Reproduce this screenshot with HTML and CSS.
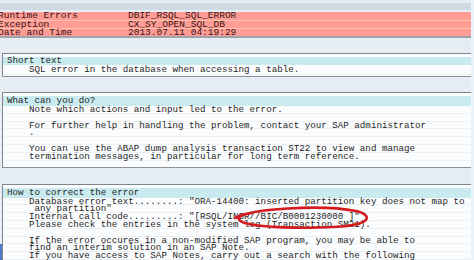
FILE: index.html
```html
<!DOCTYPE html>
<html lang="en">
  <head>
    <meta charset="UTF-8" />
    <title>ABAP runtime error</title>
    <link rel="stylesheet" href="styles.css">
  </head>
  <body>
    <div class="screen">
      <div class="topbar"></div>

      <div class="summary">
        <div class="sum-row"><span class="sum-label">Runtime Errors</span><span>DBIF_RSQL_SQL_ERROR</span></div>
        <div class="sum-row"><span class="sum-label">Exception</span><span>CX_SY_OPEN_SQL_DB</span></div>
        <div class="sum-row"><span class="sum-label">Date and Time</span><span>2013.07.11 04:19:29</span></div>
      </div>

      <div class="box box-short">
        <div class="box-head">Short text</div>
        <div class="line">    SQL error in the database when accessing a table.</div>
      </div>

      <div class="box box-help">
        <div class="box-head">What can you do?</div>
        <div class="line">    Note which actions and input led to the error.</div>
        <div class="line"> </div>
        <div class="line">    For further help in handling the problem, contact your SAP administrator</div>
        <div class="line">    .</div>
        <div class="line"> </div>
        <div class="line">    You can use the ABAP dump analysis transaction ST22 to view and manage</div>
        <div class="line">    termination messages, in particular for long term reference.</div>
      </div>

      <div class="box box-last">
        <div class="box-head">How to correct the error</div>
        <div class="line">    Database error text........: "ORA-14400: inserted partition key does not map to</div>
        <div class="line">     any partition"</div>
        <div class="line">    Internal call code.........: "[RSQL/INSR//BIC/B0001230000 ]"</div>
        <div class="line">    Please check the entries in the system log (Transaction SM21).</div>
        <div class="line"> </div>
        <div class="line">    If the error occures in a non-modified SAP program, you may be able to</div>
        <div class="line">    find an interim solution in an SAP Note.</div>
        <div class="line">    If you have access to SAP Notes, carry out a search with the following</div>

        <svg class="mark" width="140" height="24" viewBox="0 0 140 24">
          <path d="M3 13 C 18 4, 88 -1, 124 6 C 141 10, 139 19, 110 21.5 C 72 24, 28 22.5, 13 18 C 3 15, 5 10, 20 8" fill="none" stroke="#d41a1f" stroke-width="2.6" stroke-linecap="round" />
        </svg>
      </div>

      <div class="side-tab"></div>
    </div>
  </body>
</html>
```

FILE: styles.css
```css
* {
  margin: 0;
  padding: 0;
  box-sizing: border-box;
}

body {
  background-color: #e9f3f9;
  width: 474px;
  height: 260px;
  overflow: hidden;
  font-family: "Liberation Mono", "DejaVu Sans Mono", monospace;
  font-size: 9.2px;
  color: #1f1f1f;
}

.screen {
  position: relative;
  width: 471px;
  height: 260px;
  background-color: #e6edf4;
  overflow: hidden;
}

.topbar {
  height: 7px;
  margin: 3px 0 2px 0;
  background-color: #cfdae4;
}

.summary {
  background-color: #ff9c95;
  border-bottom: 2px solid #9ca4ac;
  font-size: 9.5px;
  color: #3a1414;
}

.sum-row {
  display: flex;
  height: 8px;
  line-height: 8px;
  margin-left: -2px;
  white-space: pre;
}

.sum-row + .sum-row {
  border-top: 1px solid #ffc3a8;
}

.sum-label {
  width: 130px;
}

.box {
  position: relative;
  margin: 15px 0 0 2px;
  padding: 3px 0 1px 0;
  background-color: #fbfcfd;
  border-top: 1px solid #80868c;
  border-left: 1px solid #80868c;
  border-bottom: 1px solid #8a9096;
}

.box-head {
  background-color: #c9eaee;
  height: 8px;
  line-height: 8px;
  padding-left: 4px;
}

.line {
  height: 7.8px;
  line-height: 7.8px;
  padding-left: 4px;
  white-space: pre;
  border-bottom: 1px solid #edf1f4;
}

.box-short .line {
  height: 10px;
  line-height: 10px;
}

.box-help .box-head,
.box-last .box-head {
  height: 10px;
  line-height: 9px;
}

.box-help {
  padding-bottom: 6px;
}

.box-last {
  margin-top: 16px;
}

.mark {
  position: absolute;
  left: 229px;
  top: 20px;
}

.side-tab {
  position: absolute;
  left: 0;
  top: 244px;
  width: 2px;
  height: 16px;
  background-color: #4a78c8;
}
```
